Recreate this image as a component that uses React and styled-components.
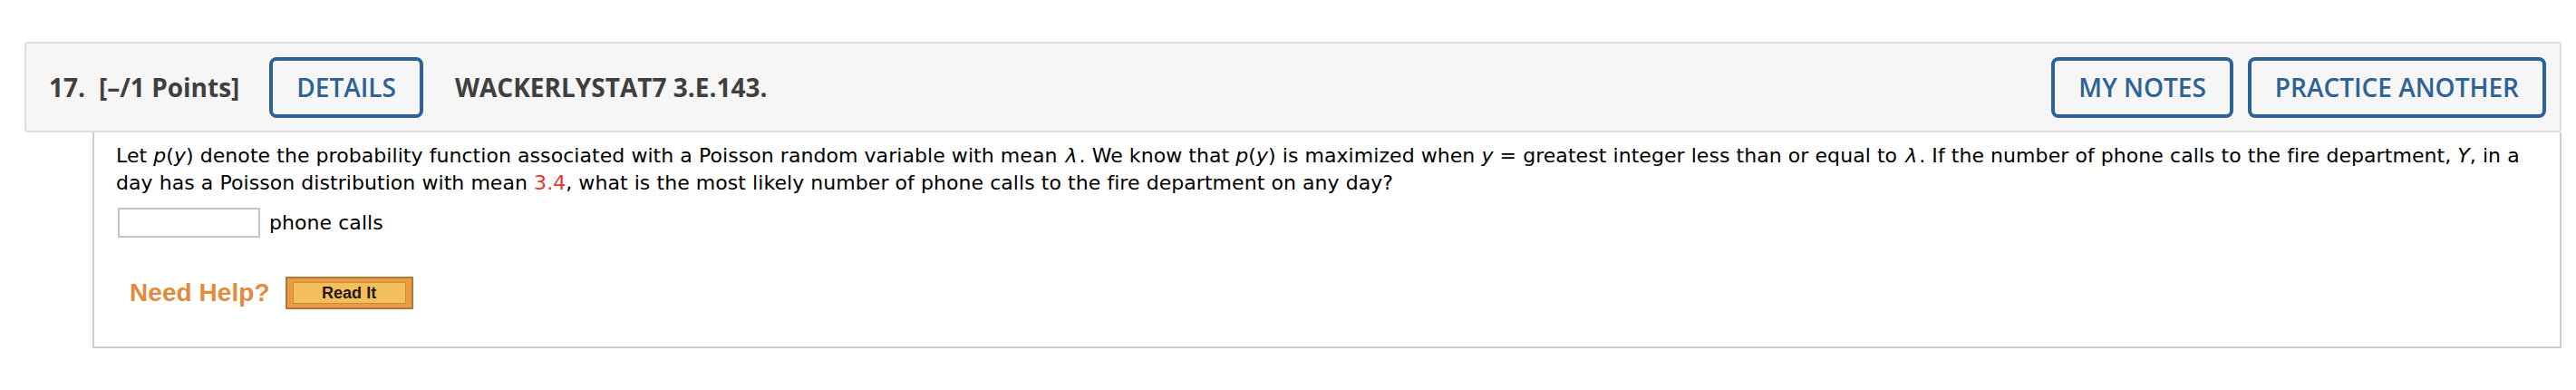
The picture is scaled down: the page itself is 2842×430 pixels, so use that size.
import React from 'react'
import styled, { createGlobalStyle } from 'styled-components'

const Global = createGlobalStyle`
body {
  margin: 0;
  background: #ffffff;
}
`

function App() {
  return (
    <Page>
      <Global />
      <Header>
        <Number>17.</Number>
        <Points>[–/1 Points]</Points>
        <OutlineButton>DETAILS</OutlineButton>
        <Code>WACKERLYSTAT7 3.E.143.</Code>
        <Spacer />
        <OutlineButton>MY NOTES</OutlineButton>
        <OutlineButton>PRACTICE ANOTHER</OutlineButton>
      </Header>
      <Body>
        <Question>
          Let <i>p</i>(<i>y</i>) denote the probability function associated with a Poisson random variable with mean <Lambda>λ</Lambda>. We know that <i>p</i>(<i>y</i>) is maximized when <i>y</i> = greatest integer less than or equal to <Lambda>λ</Lambda>. If the number of phone calls to the fire department, <i>Y</i>, in a day has a Poisson distribution with mean <Red>3.4</Red>, what is the most likely number of phone calls to the fire department on any day?
        </Question>
        <AnswerRow>
          <Answer type="text" />
          <Unit>phone calls</Unit>
        </AnswerRow>
        <HelpRow>
          <HelpLabel>Need Help?</HelpLabel>
          <ReadIt>
            <ReadItInner>Read It</ReadItInner>
          </ReadIt>
        </HelpRow>
      </Body>
    </Page>
  )
}

export default App


const Page = styled.div`
padding: 46px 16px 0 27px;
`

const Header = styled.div`
height: 100px;
box-sizing: border-box;
display: flex;
align-items: center;
padding: 0 15px 0 25px;
background: #f6f6f6;
border: 2px solid #dddddd;
border-radius: 4px;
font-family: "Open Sans", sans-serif;
color: #3f3f3f;
`

const Number = styled.span`
font-size: 28px;
font-weight: 700;
`

const Points = styled.span`
font-size: 28px;
font-weight: 700;
margin-left: 15px;
margin-right: 33px;
`

const OutlineButton = styled.div`
height: 67px;
box-sizing: border-box;
display: flex;
align-items: center;
padding: 0 26px;
border: 4px solid #2c6295;
border-radius: 8px;
color: #2c6295;
font-size: 28px;
font-weight: 600;
& + & {
  margin-left: 16px;
}
`

const Code = styled.span`
font-size: 28px;
font-weight: 700;
margin-left: 35px;
`

const Spacer = styled.div`
flex: 1;
`

const Body = styled.div`
margin-left: 75px;
height: 238px;
box-sizing: border-box;
padding: 11px 24px 0 24px;
border: 2px solid #cccccc;
border-top: none;
font-family: "DejaVu Sans", Verdana, sans-serif;
font-size: 22px;
letter-spacing: 0.06px;
color: #000000;
`

const Question = styled.div`
line-height: 30px;
`

const Lambda = styled.i`
padding: 0 2px;
`

const Red = styled.span`
color: #e8352c;
`

const AnswerRow = styled.div`
display: flex;
align-items: center;
margin-top: 12px;
margin-left: 2px;
`

const Answer = styled.input`
width: 157px;
height: 33px;
box-sizing: border-box;
margin: 0;
border: 2px solid #c4c4c4;
background: #ffffff;
`

const Unit = styled.span`
margin-left: 10px;
line-height: 30px;
`

const HelpRow = styled.div`
display: flex;
align-items: center;
margin-top: 43px;
margin-left: 15px;
`

const HelpLabel = styled.span`
font-family: "Liberation Sans", Arial, sans-serif;
font-weight: 700;
font-size: 28px;
color: #e38b3c;
`

const ReadIt = styled.div`
margin-left: 17px;
width: 141px;
height: 36px;
box-sizing: border-box;
padding: 4px 6px;
background: #eb9c42;
border: 2px solid #b07838;
display: flex;
`

const ReadItInner = styled.div`
flex: 1;
display: flex;
align-items: center;
justify-content: center;
background: #f4be5c;
border: 1px solid #c88a3c;
font-family: "Liberation Sans", Arial, sans-serif;
font-weight: 700;
font-size: 18px;
color: #1e1a10;
`
